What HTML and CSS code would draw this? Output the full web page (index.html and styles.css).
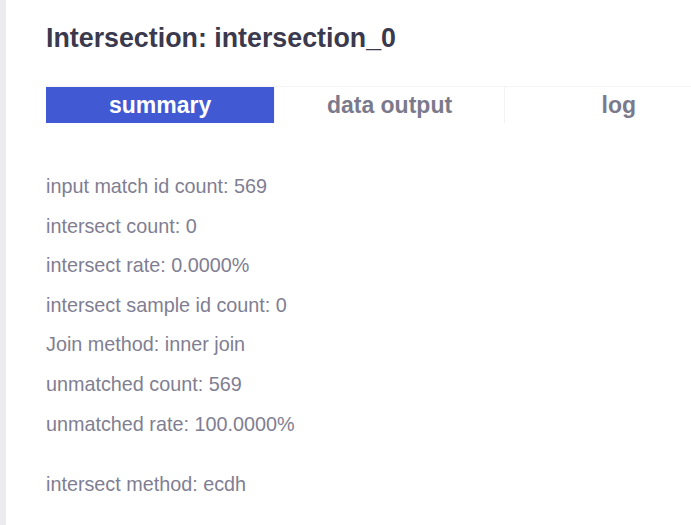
FILE: index.html
```html
<!DOCTYPE html>
<html>
<head>
<meta charset="utf-8">
<link rel="stylesheet" href="styles.css">
</head>
<body>
<div class="page">
  <div class="side"></div>
  <main class="main">
    <h1 class="title">Intersection: intersection_0</h1>
    <div class="tabs">
      <div class="tab active">summary</div>
      <div class="tab">data output</div>
      <div class="tab">log</div>
    </div>
    <ul class="summary">
      <li>input match id count: 569</li>
      <li>intersect count: 0</li>
      <li>intersect rate: 0.0000%</li>
      <li>intersect sample id count: 0</li>
      <li>Join method: inner join</li>
      <li>unmatched count: 569</li>
      <li>unmatched rate: 100.0000%</li>
      <li class="gap">intersect method: ecdh</li>
    </ul>
  </main>
</div>
</body>
</html>
```

FILE: styles.css
```css
html, body {
  margin: 0;
  padding: 0;
  background: #ffffff;
  overflow: hidden;
  font-family: "Liberation Sans", Arial, sans-serif;
}
.page {
  display: flex;
  width: 691px;
  height: 525px;
  overflow: hidden;
}
.side {
  width: 6px;
  flex: none;
  background: #ebebf0;
}
.main {
  flex: none;
  width: 687px;
  padding-left: 40px;
}
.title {
  margin: 22px 0 0;
  font-size: 26.8px;
  line-height: 32px;
  font-weight: bold;
  color: #3a394d;
}
.tabs {
  display: flex;
  margin-top: 32px;
  border-top: 1px solid #f5f5f7;
}
.tab {
  flex: 1;
  height: 36px;
  display: flex;
  align-items: center;
  justify-content: center;
  font-size: 23px;
  font-weight: bold;
  color: #7b7a8c;
  border-left: 1px solid #f3f3f5;
}
.tab:first-child {
  border-left: none;
}
.tab.active {
  background: #4159d3;
  color: #ffffff;
}
.summary {
  list-style: none;
  margin: 52px 0 0;
  padding: 0;
  color: #7f7e92;
  font-size: 19.8px;
  line-height: 22px;
}
.summary li {
  margin-bottom: 17.6px;
}
.summary li.gap {
  margin-top: 38px;
}
```
